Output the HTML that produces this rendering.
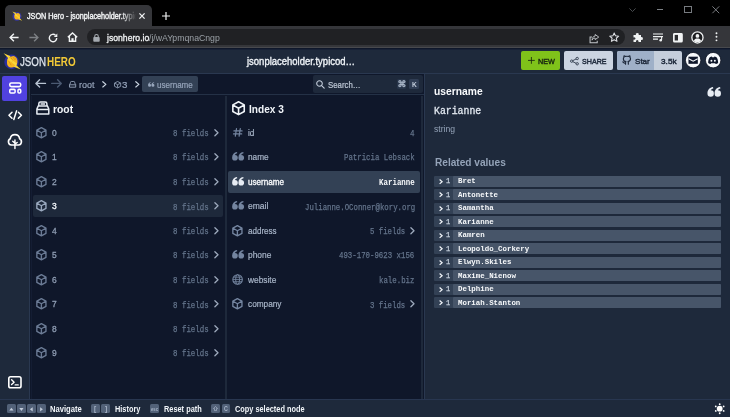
<!DOCTYPE html>
<html lang="en">
<head>
<meta charset="utf-8">
<title>JSON Hero - jsonplaceholder.typicode.com</title>
<style>
*{box-sizing:border-box;margin:0;padding:0}
html,body{width:730px;height:417px;overflow:hidden;background:#0f172a}
body{position:relative;font-family:"Liberation Sans",sans-serif;color:#e2e8f0;will-change:transform}
.a{position:absolute}
.t{position:absolute;white-space:nowrap;line-height:1;transform-origin:0 0}
svg{position:absolute;overflow:visible}
</style>
</head>
<body>
<div class="a" style="left:0px;top:0px;width:730px;height:26px;background:#000;"></div>
<div class="a" style="left:5px;top:5px;width:147px;height:22px;background:#35363a;border-radius:5px;border-radius:5px 5px 0 0;"></div>
<div class="a" style="left:0px;top:26px;width:730px;height:21.4px;background:#35363a;"></div>
<div class="a" style="left:0px;top:47.4px;width:730px;height:1.1px;background:#48494d;"></div>
<div class="a" style="left:87px;top:29.2px;width:537.5px;height:16.3px;background:#202124;border-radius:8.15px;"></div>
<svg style="left:11.8px;top:10.6px" width="10.6" height="10.6" viewBox="0 0 18.5 17.5"><circle cx="8.600" cy="8.900" r="7.800" fill="#3336a8"/><path d="M4 8.200 C3.900 5.900 5.600 4.300 7.600 3.700 L10.300 3.100 C12.500 3.300 14.100 5.200 14.400 7.400 C14.700 10 13.700 12.500 11.700 13.700 C9.600 14.900 6.500 14.700 5 12.900 C4 11.700 3.900 9.700 4 8.200 Z" fill="#f6b71f"/><path d="M0.600 0.300 L7.600 3.200 L6.300 4.700 L9.800 7.500 L8.300 9.300 L4.300 6.300 L5.300 5.200 Z M17.800 16.600 L10.800 13.800 L12.200 12.300 L8.600 9.500 L10.100 7.700 L14.200 10.700 L13.100 11.900 Z" fill="#f9d63a"/></svg>
<div class="a" style="left:26.7px;top:8px;width:109.3px;height:16px;overflow:hidden">
<div class="t" style="left:0.00px;top:4.00px;font-size:8.6px;color:#f1f3f4;-webkit-text-stroke:0.4px #f1f3f4;transform:scaleX(0.8429);">JSON Hero - jsonplaceholder.typicode.com</div>
</div>
<div class="a" style="left:122px;top:8px;width:14px;height:16px;background:linear-gradient(90deg,rgba(53,54,58,0),#35363a);"></div>
<svg style="left:139px;top:13px" width="6" height="6" viewBox="0 0 6 6"><path d="M0.4 0.4 L5.6 5.6 M5.6 0.4 L0.4 5.6" stroke="#f1f3f4" stroke-width="1.3" fill="none"/></svg>
<svg style="left:162px;top:12.3px" width="8" height="8" viewBox="0 0 8 8"><path d="M4 0 V8 M0 4 H8" stroke="#f1f3f4" stroke-width="1.2" fill="none"/></svg>
<svg style="left:628.5px;top:7.9px" width="7" height="4" viewBox="0 0 7 4"><path d="M0.4 0.4 L3.5 3.5 L6.6 0.4" stroke="#505357" stroke-width="0.9" fill="none"/></svg>
<div class="a" style="left:656.6px;top:9.4px;width:6.4px;height:0.9px;background:#7d8186;"></div>
<div class="a" style="left:684.4px;top:5.7px;width:7.8px;height:7.6px;border:1px solid #777b80"></div>
<svg style="left:712.2px;top:5.7px" width="7.6" height="7.6" viewBox="0 0 8 8"><path d="M0.4 0.4 L7.6 7.6 M7.6 0.4 L0.4 7.6" stroke="#7d8186" stroke-width="1" fill="none"/></svg>
<svg style="left:8.5px;top:33px" width="10" height="9" viewBox="0 0 10 9"><path d="M9.6 4.5 H1.4 M4.9 0.7 L1.1 4.5 L4.9 8.3" stroke="#f1f3f4" stroke-width="1.4" fill="none"/></svg>
<svg style="left:28.5px;top:33px" width="10" height="9" viewBox="0 0 10 9"><path d="M0.4 4.5 H8.6 M5.1 0.7 L8.9 4.5 L5.1 8.3" stroke="#7d8084" stroke-width="1.4" fill="none"/></svg>
<svg style="left:48px;top:32.5px" width="10" height="10" viewBox="0 0 10 10"><path d="M8.7 5 A3.7 3.7 0 1 1 7.5 2.3" stroke="#f1f3f4" stroke-width="1.4" fill="none"/><path d="M9.3 0.6 V4.1 H5.8 Z" fill="#f1f3f4"/></svg>
<svg style="left:67px;top:32.2px" width="11" height="10" viewBox="0 0 11 10"><path d="M0.8 5.2 L5.5 1 L10.2 5.2 M2.4 4.2 V9.3 H8.6 V4.2" stroke="#f1f3f4" stroke-width="1.4" fill="none"/><rect x="4.4" y="6.2" width="2.2" height="3" fill="#f1f3f4"/></svg>
<svg style="left:93.4px;top:33.7px" width="7" height="7.8" viewBox="0 0 7 8"><rect x="0.2" y="3.2" width="6.6" height="4.7" rx="0.8" fill="#a4a9af"/><path d="M1.7 3.4 V2.3 A1.8 1.8 0 0 1 5.3 2.3 V3.4" stroke="#a4a9af" stroke-width="1.1" fill="none"/></svg>
<div class="t" style="left:106.70px;top:33.00px;font-size:9.6px;color:#f1f3f4;-webkit-text-stroke:0.3px #f1f3f4;transform:scaleX(0.9012);">jsonhero.io</div>
<div class="t" style="left:149.20px;top:33.00px;font-size:9.6px;color:#9aa0a6;transform:scaleX(0.9071);">/j/wAYpmqnaCngp</div>
<svg style="left:588.7px;top:33.6px" width="10.3" height="9.2" viewBox="0 0 10 9"><path d="M3 3 H1 V8.5 H8 V6.5" stroke="#c4c7cc" stroke-width="1" fill="none"/><path d="M6 0.5 L9.5 3 L6 5.5 V4 C4.5 4 3.6 4.6 3 6 C3 3.8 4 2.3 6 2 Z" stroke="#c4c7cc" stroke-width="0.9" fill="none"/></svg>
<svg style="left:608.7px;top:32.3px" width="10.4" height="10.4" viewBox="0 0 10 10"><path d="M5 0.9 L6.25 3.7 L9.3 4 L7 6 L7.7 9 L5 7.4 L2.3 9 L3 6 L0.7 4 L3.75 3.7 Z" stroke="#dfe1e5" stroke-width="1" fill="none" stroke-linejoin="round"/></svg>
<svg style="left:633px;top:32px" width="10" height="10" viewBox="0 0 10 10"><path d="M0.5 3 H3 A1.4 1.4 0 1 1 5.6 3 H8 V5.2 A1.4 1.4 0 1 1 8 7.8 V10 H5.4 A1.3 1.3 0 1 0 3.1 10 H0.5 V7.6 A1.3 1.3 0 1 0 0.5 5.4 Z" fill="#f1f3f4"/></svg>
<svg style="left:653px;top:33px" width="10" height="9" viewBox="0 0 10 9"><path d="M0 1 H10 M0 3.6 H10 M0 6.2 H5" stroke="#f1f3f4" stroke-width="1.2" fill="none"/><path d="M8.6 3.6 V7" stroke="#f1f3f4" stroke-width="1.1"/><circle cx="7.7" cy="7.3" r="1.3" fill="#f1f3f4"/></svg>
<svg style="left:672.5px;top:32.6px" width="9.8" height="9.4" viewBox="0 0 9.8 9.4"><rect x="0.7" y="0.7" width="8.400" height="8" rx="0.8" stroke="#f1f3f4" stroke-width="1.400" fill="#f1f3f4"/><rect x="1.700" y="1.900" width="3.300" height="5.600" fill="#2a2b2e"/></svg>
<svg style="left:691px;top:31.2px" width="12.9" height="12.9" viewBox="0 0 12.9 12.9"><circle cx="6.450" cy="6.450" r="5.600" fill="#1b1c1f" stroke="#f1f3f4" stroke-width="1.300"/><circle cx="6.450" cy="4.900" r="1.900" fill="#f1f3f4"/><path d="M2.900 9.700 C3.300 8 4.800 7.500 6.450 7.500 C8.100 7.500 9.600 8 10 9.700 C9 10.700 7.800 11.200 6.450 11.200 C5.100 11.200 3.900 10.700 2.900 9.700 Z" fill="#f1f3f4"/></svg>
<svg style="left:715.2px;top:32.3px" width="3" height="9.6" viewBox="0 0 3 10"><circle cx="1.5" cy="1.3" r="1" fill="#f1f3f4"/><circle cx="1.5" cy="5" r="1" fill="#f1f3f4"/><circle cx="1.5" cy="8.7" r="1" fill="#f1f3f4"/></svg>
<div class="a" style="left:0px;top:48.5px;width:730px;height:25px;background:#1e293b;"></div>
<div class="a" style="left:0px;top:48.5px;width:730px;height:1.6px;background:#172136;"></div>
<div class="a" style="left:0px;top:73px;width:730px;height:1px;background:#2a3850;"></div>
<svg style="left:3px;top:52.5px" width="18.5" height="17.5" viewBox="0 0 18.5 17.5"><circle cx="8.600" cy="8.900" r="7.300" fill="#2b2f9f"/><path d="M4 8.200 C3.900 5.900 5.600 4.300 7.600 3.700 L10.300 3.100 C12.500 3.300 14.100 5.200 14.400 7.400 C14.700 10 13.700 12.500 11.700 13.700 C9.600 14.900 6.500 14.700 5 12.900 C4 11.700 3.900 9.700 4 8.200 Z" fill="#f6b71f"/><path d="M7.900 4.600 L9.900 7.600 M9.900 3.900 L11.900 6.900 M11.700 4.600 L13.300 7.300 M5.600 8.200 L8.200 12.300" stroke="#c98a12" stroke-width="0.600" fill="none"/><path d="M0.600 0.300 L7.600 3.200 L6.300 4.700 L9.800 7.500 L8.300 9.300 L4.300 6.300 L5.300 5.200 Z M17.800 16.600 L10.800 13.800 L12.200 12.300 L8.600 9.500 L10.100 7.700 L14.200 10.700 L13.100 11.900 Z" fill="#f9d63a"/></svg>
<div class="t" style="left:20.40px;top:56.00px;font-size:12px;color:#e2e8f0;-webkit-text-stroke:0.25px #e2e8f0;transform:scaleX(0.8121);">JSON</div>
<div class="t" style="left:47.00px;top:56.00px;font-size:12px;color:#f2c937;font-weight:bold;transform:scaleX(0.8249);">HERO</div>
<div class="t" style="left:247.30px;top:56.00px;font-size:11px;color:#f1f5f9;-webkit-text-stroke:0.35px #f1f5f9;transform:scaleX(0.8615);">jsonplaceholder.typicod…</div>
<div class="a" style="left:521px;top:51.3px;width:39.2px;height:18.8px;background:#7fc21a;border-radius:2px;"></div>
<svg style="left:527.8px;top:57.4px" width="6.8" height="6.8" viewBox="0 0 7 7"><path d="M3.5 0 V7 M0 3.5 H7" stroke="#1b2a10" stroke-width="0.9" fill="none"/></svg>
<div class="t" style="left:537.60px;top:58.00px;font-size:8.1px;color:#1b2a10;-webkit-text-stroke:0.45px #1b2a10;transform:scaleX(0.8946);">NEW</div>
<div class="a" style="left:564px;top:51.3px;width:48.6px;height:18.8px;background:#cbd4e1;border-radius:2px;"></div>
<svg style="left:570px;top:56.6px" width="9" height="8.3" viewBox="0 0 9 8.3"><circle cx="1.7" cy="4.15" r="1.2" stroke="#1e293b" stroke-width="0.8" fill="none"/><circle cx="7.2" cy="1.5" r="1.2" stroke="#1e293b" stroke-width="0.8" fill="none"/><circle cx="7.2" cy="6.8" r="1.2" stroke="#1e293b" stroke-width="0.8" fill="none"/><path d="M2.8 3.6 L6.1 2 M2.8 4.7 L6.1 6.3" stroke="#1e293b" stroke-width="0.8"/></svg>
<div class="t" style="left:582.00px;top:58.00px;font-size:8.1px;color:#1e293b;-webkit-text-stroke:0.45px #1e293b;transform:scaleX(0.8820);">SHARE</div>
<div class="a" style="left:617px;top:51.3px;width:64.8px;height:18.8px;background:#c5cedb;border-radius:2px;"></div>
<div class="a" style="left:617px;top:51.3px;width:37.4px;height:18.8px;background:#9fb0c8;border-radius:2px 0 0 2px;"></div>
<svg style="left:622.1px;top:55.4px" width="9.5" height="10.1" viewBox="0 0 24 23"><path d="M9 19c-5 1.5-5-2.5-7-3m14 6v-3.87a3.37 3.37 0 0 0-.94-2.61c3.14-.35 6.44-1.54 6.44-7A5.44 5.44 0 0 0 20 4.77 5.07 5.07 0 0 0 19.91 1S18.73.65 16 2.48a13.38 13.38 0 0 0-7 0C6.27.65 5.09 1 5.09 1A5.07 5.07 0 0 0 5 4.77a5.44 5.44 0 0 0-1.500 3.780c0 5.420 3.300 6.610 6.440 7A3.370 3.370 0 0 0 9 18.130V22" stroke="#1e293b" stroke-width="2.9" fill="none" stroke-linecap="round" stroke-linejoin="round"/></svg>
<div class="t" style="left:634.70px;top:58.00px;font-size:8.1px;color:#1e293b;-webkit-text-stroke:0.45px #1e293b;transform:scaleX(0.9960);">Star</div>
<div class="t" style="left:660.50px;top:58.00px;font-size:8.1px;color:#1e293b;-webkit-text-stroke:0.45px #1e293b;transform:scaleX(1.0188);">3.5k</div>
<svg style="left:685.3px;top:52.3px" width="16.3" height="16.3" viewBox="0 0 16 16"><circle cx="8" cy="8" r="7.6" fill="#f8fafc" stroke="#0b1120" stroke-width="0.8"/><path d="M3.4 4.6 H12.6 V11.6 H3.4 Z" fill="#0f172a"/><path d="M3.6 6.6 L8 9 L12.4 6.6" stroke="#f8fafc" stroke-width="1.1" fill="none"/></svg>
<svg style="left:705.2px;top:52.3px" width="16.3" height="16.3" viewBox="0 0 16 16"><circle cx="8" cy="8" r="7.6" fill="#f8fafc" stroke="#0b1120" stroke-width="0.8"/><path d="M3.1 10.9 C3.1 8.2 3.8 6.300 4.700 5.200 C5.500 4.800 6.200 4.600 6.800 4.500 L7.100 5.100 H8.900 L9.200 4.500 C9.800 4.600 10.500 4.800 11.300 5.200 C12.200 6.300 12.900 8.200 12.900 10.900 C12.100 11.500 11.300 11.800 10.500 11.900 L9.900 11 H6.100 L5.500 11.900 C4.700 11.800 3.900 11.500 3.100 10.900 Z" fill="#0f172a"/><ellipse cx="6.300" cy="8.600" rx="0.950" ry="1.050" fill="#f8fafc"/><ellipse cx="9.700" cy="8.600" rx="0.950" ry="1.050" fill="#f8fafc"/></svg>
<div class="a" style="left:0px;top:74px;width:29.2px;height:325px;background:#1e293b;"></div>
<div class="a" style="left:29.2px;top:74px;width:1.3px;height:325px;background:#2a3850;"></div>
<div class="a" style="left:2.2px;top:75.7px;width:25.1px;height:25.6px;background:#5142e0;border-radius:2px;"></div>
<svg style="left:8.7px;top:82.2px" width="12.5" height="12" viewBox="0 0 13.1 12.3"><rect x="0.8" y="0.8" width="11.5" height="3.9" rx="1.6" stroke="#fff" stroke-width="1.6" fill="none"/><rect x="0.8" y="7.6" width="5.6" height="3.9" rx="1.1" stroke="#fff" stroke-width="1.6" fill="none"/><rect x="9.4" y="7.6" width="2.9" height="3.9" rx="1.1" stroke="#fff" stroke-width="1.6" fill="none"/></svg>
<svg style="left:6.6px;top:110.2px" width="16.4" height="10.4" viewBox="0 0 15.1 10.9"><path d="M4.2 2.3 L1 5.45 L4.2 8.6 M10.9 2.3 L14.1 5.45 L10.9 8.6 M9 0.9 L6.1 10" stroke="#fff" stroke-width="1.6" fill="none" stroke-linecap="round" stroke-linejoin="round"/></svg>
<svg style="left:7.1px;top:132.9px" width="15.9" height="16.7" viewBox="0 0 15.5 15.8"><path d="M4.300 11.500 A3.300 3.300 0 0 1 3.200 5.300 A4.600 4.600 0 0 1 12.300 5.300 A3.300 3.300 0 0 1 11.200 11.500 Z" stroke="#fff" stroke-width="1.6" fill="none" stroke-linejoin="round"/><path d="M7.750 15 V6.600 M7.750 9.600 L5.600 7.800 M7.750 10.800 L9.900 9" stroke="#fff" stroke-width="1.4" fill="none" stroke-linecap="round"/></svg>
<svg style="left:8.1px;top:375.5px" width="13.8" height="12.5" viewBox="0 0 13.8 12.5"><rect x="0.8" y="0.8" width="12.2" height="10.9" rx="1.8" stroke="#fff" stroke-width="1.6" fill="none"/><path d="M3.6 3.800 L6.100 6.200 L3.600 8.600 M7.200 8.900 H10.200" stroke="#fff" stroke-width="1.4" fill="none" stroke-linecap="round" stroke-linejoin="round"/></svg>
<div class="a" style="left:30.5px;top:94px;width:393px;height:1px;background:#243146;"></div>
<svg style="left:34.6px;top:79.3px" width="11.2" height="8.8" viewBox="0 0 11.2 8.8"><path d="M10.5 4.4 H1 M4.600 0.8 L0.9 4.4 L4.600 8" stroke="#b9c4d3" stroke-width="1.4" fill="none" stroke-linecap="round" stroke-linejoin="round"/></svg>
<svg style="left:51px;top:79.3px" width="11.2" height="8.8" viewBox="0 0 11.2 8.8"><path d="M0.7 4.4 H10.2 M6.600 0.8 L10.300 4.4 L6.600 8" stroke="#4b5a72" stroke-width="1.4" fill="none" stroke-linecap="round" stroke-linejoin="round"/></svg>
<svg style="left:69.1px;top:80.9px" width="7.2" height="6.7" viewBox="0 0 7.2 6.7"><path d="M0.5 6.200 V3.600 L1.500 2 V1.400 A0.900 0.900 0 0 1 2.400 0.500 H4.800 A0.900 0.900 0 0 1 5.700 1.400 V2 L6.700 3.600 V6.200 Z M0.500 3.800 H6.700" stroke="#97a5bb" stroke-width="0.9" fill="none" stroke-linejoin="round"/></svg>
<div class="t" style="left:78.90px;top:80.00px;font-size:9.4px;color:#97a5bb;-webkit-text-stroke:0.2px #97a5bb;transform:scaleX(0.9532);">root</div>
<svg style="left:101.8px;top:81.4px" width="4.7" height="6.7" viewBox="0 0 4.7 6.7"><path d="M0.8 0.700 L3.900 3.350 L0.800 6" stroke="#cbd5e1" stroke-width="1.2" fill="none" stroke-linecap="round" stroke-linejoin="round"/></svg>
<svg style="left:113.8px;top:80.7px" width="7.2" height="7.4" viewBox="0 0 7.2 7.4"><path d="M3.600 0.500 L6.700 2.100 V5.300 L3.600 6.900 L0.500 5.300 V2.100 Z M0.700 2.200 L3.600 3.700 L6.500 2.200 M3.600 3.700 V6.700" stroke="#97a5bb" stroke-width="0.85" fill="none" stroke-linejoin="round"/></svg>
<div class="t" style="left:122.20px;top:80.00px;font-size:9.4px;color:#97a5bb;-webkit-text-stroke:0.2px #97a5bb;transform:scaleX(1.0347);">3</div>
<svg style="left:134.8px;top:81.4px" width="4.7" height="6.7" viewBox="0 0 4.7 6.7"><path d="M0.8 0.700 L3.900 3.350 L0.800 6" stroke="#cbd5e1" stroke-width="1.2" fill="none" stroke-linecap="round" stroke-linejoin="round"/></svg>
<div class="a" style="left:142.1px;top:75.9px;width:56.1px;height:16.4px;background:#334155;border-radius:2px;"></div>
<svg style="left:147.7px;top:82px" width="6.3" height="5" viewBox="0 0 11.8 8.7"><path d="M0.100 5.750 C0.100 2.600 2.100 0.500 5 0.100 L5.300 1.300 C4.100 1.600 3.300 2.200 3 2.900 A2.850 2.850 0 1 1 0.100 5.750 Z" fill="#97a5bb"/><path d="M6.400 5.750 C6.400 2.600 8.400 0.500 11.300 0.100 L11.600 1.300 C10.400 1.600 9.600 2.200 9.300 2.900 A2.850 2.850 0 1 1 6.400 5.750 Z" fill="#97a5bb"/></svg>
<div class="t" style="left:157.20px;top:80.00px;font-size:9.4px;color:#97a5bb;-webkit-text-stroke:0.2px #97a5bb;transform:scaleX(0.8584);">username</div>
<div class="a" style="left:313.4px;top:75.4px;width:109.4px;height:17.6px;background:#1e293b;border-radius:2px;"></div>
<svg style="left:316.3px;top:80px" width="8.8" height="8.8" viewBox="0 0 8.8 8.8"><circle cx="3.500" cy="3.500" r="2.800" stroke="#c3cddb" stroke-width="1.05" fill="none"/><path d="M5.600 5.600 L8.200 8.200" stroke="#c3cddb" stroke-width="1.15" stroke-linecap="round"/></svg>
<div class="t" style="left:328.40px;top:80.00px;font-size:9.4px;color:#c0cad8;-webkit-text-stroke:0.2px #c0cad8;transform:scaleX(0.8339);">Search…</div>
<div class="a" style="left:396.9px;top:79.2px;width:9.5px;height:10px;background:#273449;border-radius:1.5px;"></div>
<div class="t" style="left:397.6px;top:80px;font-size:8.8px;color:#b4c0d2;-webkit-text-stroke:0.3px #b4c0d2;font-family:'DejaVu Sans',sans-serif">⌘</div>
<div class="a" style="left:409.3px;top:79.2px;width:9.6px;height:9.8px;background:#303d54;border-radius:1.5px;"></div>
<div class="t" style="left:411.60px;top:81.00px;font-size:7.2px;color:#c3cddb;font-weight:bold;transform:scaleX(0.9225);">K</div>
<div class="a" style="left:30.5px;top:96px;width:1.5px;height:303px;background:#141d33;"></div>
<div class="a" style="left:225.3px;top:96px;width:2px;height:303px;background:#1e293b;"></div>
<div class="a" style="left:421.3px;top:96px;width:2px;height:303px;background:#1e293b;"></div>
<svg style="left:35.6px;top:101.4px" width="13.7" height="13.9" viewBox="0 0 13.7 13.7"><path d="M0.900 12.800 V8.400 C0.900 7.600 1.200 7 1.600 6.300 L2.800 3.900 V2.600 A1.700 1.700 0 0 1 4.500 0.900 H9.200 A1.700 1.700 0 0 1 10.900 2.600 V3.900 L12.100 6.300 C12.500 7 12.800 7.600 12.800 8.400 V12.800 Z M1 8.300 H12.700 M2.800 4.800 H10.900 M4.600 3 H9.100" stroke="#e8edf4" stroke-width="1.5" fill="none" stroke-linejoin="round"/></svg>
<div class="t" style="left:52.60px;top:103.00px;font-size:11.6px;color:#f1f5f9;font-weight:bold;transform:scaleX(0.8915);">root</div>
<div class="a" style="left:32.5px;top:195.2px;width:190.5px;height:21.8px;background:#1e293b;border-radius:2px;"></div>
<svg style="left:231.8px;top:100.6px" width="13.1" height="14.4" viewBox="0 0 13 14.4"><path d="M6.500 0.800 L12.200 3.900 V10.500 L6.500 13.600 L0.800 10.500 V3.900 Z M1.100 4.100 L6.500 7.200 L11.900 4.100 M6.500 7.200 V13.300" stroke="#f1f5f9" stroke-width="1.6" fill="none" stroke-linejoin="round"/></svg>
<div class="t" style="left:248.70px;top:104.00px;font-size:11.5px;color:#f1f5f9;font-weight:bold;transform:scaleX(0.8779);">Index 3</div>
<div class="a" style="left:228px;top:170.6px;width:191.7px;height:22px;background:#334155;border-radius:2px;"></div>
<svg style="left:35.6px;top:126.8px" width="10.8" height="11.5" viewBox="0 0 13 14.4"><path d="M6.500 0.800 L12.200 3.900 V10.500 L6.500 13.600 L0.800 10.500 V3.900 Z M1.100 4.100 L6.500 7.200 L11.900 4.100 M6.500 7.200 V13.300" stroke="#6b7b95" stroke-width="1.7" fill="none" stroke-linejoin="round"/></svg>
<div class="t" style="left:52.00px;top:128.00px;font-size:9.4px;color:#909eb4;-webkit-text-stroke:0.3px #909eb4;transform:scaleX(0.9006);">0</div>
<div class="t" style="left:172.60px;top:129.00px;font-size:9.4px;color:#64748b;font-family:'Liberation Mono',monospace;-webkit-text-stroke:0.25px #64748b;transform:scaleX(0.7931);">8 fields</div>
<svg style="left:213.8px;top:128.8px" width="4.9" height="7.6" viewBox="0 0 4.9 7.6"><path d="M0.900 0.800 L4 3.800 L0.900 6.800" stroke="#9eaabd" stroke-width="1.3" fill="none" stroke-linecap="round" stroke-linejoin="round"/></svg>
<svg style="left:35.6px;top:151.3px" width="10.8" height="11.5" viewBox="0 0 13 14.4"><path d="M6.500 0.800 L12.200 3.900 V10.500 L6.500 13.600 L0.800 10.500 V3.900 Z M1.100 4.100 L6.500 7.200 L11.900 4.100 M6.500 7.200 V13.300" stroke="#6b7b95" stroke-width="1.7" fill="none" stroke-linejoin="round"/></svg>
<div class="t" style="left:52.00px;top:152.00px;font-size:9.4px;color:#909eb4;-webkit-text-stroke:0.3px #909eb4;transform:scaleX(0.9006);">1</div>
<div class="t" style="left:172.60px;top:153.00px;font-size:9.4px;color:#64748b;font-family:'Liberation Mono',monospace;-webkit-text-stroke:0.25px #64748b;transform:scaleX(0.7931);">8 fields</div>
<svg style="left:213.8px;top:153.3px" width="4.9" height="7.6" viewBox="0 0 4.9 7.6"><path d="M0.900 0.800 L4 3.800 L0.900 6.800" stroke="#9eaabd" stroke-width="1.3" fill="none" stroke-linecap="round" stroke-linejoin="round"/></svg>
<svg style="left:35.6px;top:175.8px" width="10.8" height="11.5" viewBox="0 0 13 14.4"><path d="M6.500 0.800 L12.200 3.900 V10.500 L6.500 13.600 L0.800 10.500 V3.900 Z M1.100 4.100 L6.500 7.200 L11.900 4.100 M6.500 7.200 V13.300" stroke="#6b7b95" stroke-width="1.7" fill="none" stroke-linejoin="round"/></svg>
<div class="t" style="left:52.00px;top:177.00px;font-size:9.4px;color:#909eb4;-webkit-text-stroke:0.3px #909eb4;transform:scaleX(0.9006);">2</div>
<div class="t" style="left:172.60px;top:178.00px;font-size:9.4px;color:#64748b;font-family:'Liberation Mono',monospace;-webkit-text-stroke:0.25px #64748b;transform:scaleX(0.7931);">8 fields</div>
<svg style="left:213.8px;top:177.8px" width="4.9" height="7.6" viewBox="0 0 4.9 7.6"><path d="M0.900 0.800 L4 3.800 L0.900 6.800" stroke="#9eaabd" stroke-width="1.3" fill="none" stroke-linecap="round" stroke-linejoin="round"/></svg>
<svg style="left:35.6px;top:200.3px" width="10.8" height="11.5" viewBox="0 0 13 14.4"><path d="M6.500 0.800 L12.200 3.900 V10.500 L6.500 13.600 L0.800 10.500 V3.900 Z M1.100 4.100 L6.500 7.200 L11.900 4.100 M6.500 7.200 V13.300" stroke="#9aa9bf" stroke-width="1.7" fill="none" stroke-linejoin="round"/></svg>
<div class="t" style="left:52.00px;top:201.00px;font-size:9.4px;color:#f1f5f9;-webkit-text-stroke:0.35px #f1f5f9;transform:scaleX(0.9006);">3</div>
<div class="t" style="left:172.60px;top:203.00px;font-size:9.4px;color:#64748b;font-family:'Liberation Mono',monospace;-webkit-text-stroke:0.25px #64748b;transform:scaleX(0.7931);">8 fields</div>
<svg style="left:213.8px;top:202.3px" width="4.9" height="7.6" viewBox="0 0 4.9 7.6"><path d="M0.900 0.800 L4 3.800 L0.900 6.800" stroke="#9eaabd" stroke-width="1.3" fill="none" stroke-linecap="round" stroke-linejoin="round"/></svg>
<svg style="left:35.6px;top:224.8px" width="10.8" height="11.5" viewBox="0 0 13 14.4"><path d="M6.500 0.800 L12.200 3.900 V10.500 L6.500 13.600 L0.800 10.500 V3.900 Z M1.100 4.100 L6.500 7.200 L11.900 4.100 M6.500 7.200 V13.300" stroke="#6b7b95" stroke-width="1.7" fill="none" stroke-linejoin="round"/></svg>
<div class="t" style="left:52.00px;top:226.00px;font-size:9.4px;color:#909eb4;-webkit-text-stroke:0.3px #909eb4;transform:scaleX(0.9006);">4</div>
<div class="t" style="left:172.60px;top:227.00px;font-size:9.4px;color:#64748b;font-family:'Liberation Mono',monospace;-webkit-text-stroke:0.25px #64748b;transform:scaleX(0.7931);">8 fields</div>
<svg style="left:213.8px;top:226.8px" width="4.9" height="7.6" viewBox="0 0 4.9 7.6"><path d="M0.900 0.800 L4 3.800 L0.900 6.800" stroke="#9eaabd" stroke-width="1.3" fill="none" stroke-linecap="round" stroke-linejoin="round"/></svg>
<svg style="left:35.6px;top:249.3px" width="10.8" height="11.5" viewBox="0 0 13 14.4"><path d="M6.500 0.800 L12.200 3.900 V10.500 L6.500 13.600 L0.800 10.500 V3.900 Z M1.100 4.100 L6.500 7.200 L11.900 4.100 M6.500 7.200 V13.300" stroke="#6b7b95" stroke-width="1.7" fill="none" stroke-linejoin="round"/></svg>
<div class="t" style="left:52.00px;top:250.00px;font-size:9.4px;color:#909eb4;-webkit-text-stroke:0.3px #909eb4;transform:scaleX(0.9006);">5</div>
<div class="t" style="left:172.60px;top:251.00px;font-size:9.4px;color:#64748b;font-family:'Liberation Mono',monospace;-webkit-text-stroke:0.25px #64748b;transform:scaleX(0.7931);">8 fields</div>
<svg style="left:213.8px;top:251.3px" width="4.9" height="7.6" viewBox="0 0 4.9 7.6"><path d="M0.900 0.800 L4 3.800 L0.900 6.800" stroke="#9eaabd" stroke-width="1.3" fill="none" stroke-linecap="round" stroke-linejoin="round"/></svg>
<svg style="left:35.6px;top:273.8px" width="10.8" height="11.5" viewBox="0 0 13 14.4"><path d="M6.500 0.800 L12.200 3.900 V10.500 L6.500 13.600 L0.800 10.500 V3.900 Z M1.100 4.100 L6.500 7.200 L11.900 4.100 M6.500 7.200 V13.300" stroke="#6b7b95" stroke-width="1.7" fill="none" stroke-linejoin="round"/></svg>
<div class="t" style="left:52.00px;top:275.00px;font-size:9.4px;color:#909eb4;-webkit-text-stroke:0.3px #909eb4;transform:scaleX(0.9006);">6</div>
<div class="t" style="left:172.60px;top:276.00px;font-size:9.4px;color:#64748b;font-family:'Liberation Mono',monospace;-webkit-text-stroke:0.25px #64748b;transform:scaleX(0.7931);">8 fields</div>
<svg style="left:213.8px;top:275.8px" width="4.9" height="7.6" viewBox="0 0 4.9 7.6"><path d="M0.900 0.800 L4 3.800 L0.900 6.800" stroke="#9eaabd" stroke-width="1.3" fill="none" stroke-linecap="round" stroke-linejoin="round"/></svg>
<svg style="left:35.6px;top:298.3px" width="10.8" height="11.5" viewBox="0 0 13 14.4"><path d="M6.500 0.800 L12.200 3.900 V10.500 L6.500 13.600 L0.800 10.500 V3.900 Z M1.100 4.100 L6.500 7.200 L11.900 4.100 M6.500 7.200 V13.300" stroke="#6b7b95" stroke-width="1.7" fill="none" stroke-linejoin="round"/></svg>
<div class="t" style="left:52.00px;top:299.00px;font-size:9.4px;color:#909eb4;-webkit-text-stroke:0.3px #909eb4;transform:scaleX(0.9006);">7</div>
<div class="t" style="left:172.60px;top:301.00px;font-size:9.4px;color:#64748b;font-family:'Liberation Mono',monospace;-webkit-text-stroke:0.25px #64748b;transform:scaleX(0.7931);">8 fields</div>
<svg style="left:213.8px;top:300.3px" width="4.9" height="7.6" viewBox="0 0 4.9 7.6"><path d="M0.900 0.800 L4 3.800 L0.900 6.800" stroke="#9eaabd" stroke-width="1.3" fill="none" stroke-linecap="round" stroke-linejoin="round"/></svg>
<svg style="left:35.6px;top:322.8px" width="10.8" height="11.5" viewBox="0 0 13 14.4"><path d="M6.500 0.800 L12.200 3.900 V10.500 L6.500 13.600 L0.800 10.500 V3.900 Z M1.100 4.100 L6.500 7.200 L11.900 4.100 M6.500 7.200 V13.300" stroke="#6b7b95" stroke-width="1.7" fill="none" stroke-linejoin="round"/></svg>
<div class="t" style="left:52.00px;top:324.00px;font-size:9.4px;color:#909eb4;-webkit-text-stroke:0.3px #909eb4;transform:scaleX(0.9006);">8</div>
<div class="t" style="left:172.60px;top:325.00px;font-size:9.4px;color:#64748b;font-family:'Liberation Mono',monospace;-webkit-text-stroke:0.25px #64748b;transform:scaleX(0.7931);">8 fields</div>
<svg style="left:213.8px;top:324.8px" width="4.9" height="7.6" viewBox="0 0 4.9 7.6"><path d="M0.900 0.800 L4 3.800 L0.900 6.800" stroke="#9eaabd" stroke-width="1.3" fill="none" stroke-linecap="round" stroke-linejoin="round"/></svg>
<svg style="left:35.6px;top:347.3px" width="10.8" height="11.5" viewBox="0 0 13 14.4"><path d="M6.500 0.800 L12.200 3.900 V10.500 L6.500 13.600 L0.800 10.500 V3.900 Z M1.100 4.100 L6.500 7.200 L11.900 4.100 M6.500 7.200 V13.300" stroke="#6b7b95" stroke-width="1.7" fill="none" stroke-linejoin="round"/></svg>
<div class="t" style="left:52.00px;top:348.00px;font-size:9.4px;color:#909eb4;-webkit-text-stroke:0.3px #909eb4;transform:scaleX(0.9006);">9</div>
<div class="t" style="left:172.60px;top:349.00px;font-size:9.4px;color:#64748b;font-family:'Liberation Mono',monospace;-webkit-text-stroke:0.25px #64748b;transform:scaleX(0.7931);">8 fields</div>
<svg style="left:213.8px;top:349.3px" width="4.9" height="7.6" viewBox="0 0 4.9 7.6"><path d="M0.900 0.800 L4 3.800 L0.900 6.800" stroke="#9eaabd" stroke-width="1.3" fill="none" stroke-linecap="round" stroke-linejoin="round"/></svg>
<svg style="left:232.5px;top:128px" width="9.6" height="8.8" viewBox="0 0 9.6 8.8"><path d="M3.500 0.600 L2.300 8.200 M7.300 0.600 L6.100 8.200 M0.900 2.900 H9.100 M0.500 5.900 H8.700" stroke="#7485a0" stroke-width="1.2" fill="none" stroke-linecap="round"/></svg>
<div class="t" style="left:248.20px;top:128.00px;font-size:9.4px;color:#a9b6c9;-webkit-text-stroke:0.2px #a9b6c9;transform:scaleX(0.8771);">id</div>
<div class="t" style="left:410.00px;top:129.00px;font-size:9.4px;color:#64748b;font-family:'Liberation Mono',monospace;-webkit-text-stroke:0.25px #64748b;transform:scaleX(0.7978);">4</div>
<svg style="left:231.5px;top:152.3px" width="11.8" height="8.7" viewBox="0 0 11.8 8.7"><path d="M0.100 5.750 C0.100 2.600 2.100 0.500 5 0.100 L5.300 1.300 C4.100 1.600 3.300 2.200 3 2.900 A2.850 2.850 0 1 1 0.100 5.750 Z" fill="#7485a0"/><path d="M6.400 5.750 C6.400 2.600 8.400 0.500 11.300 0.100 L11.600 1.300 C10.400 1.600 9.600 2.200 9.300 2.900 A2.850 2.850 0 1 1 6.400 5.750 Z" fill="#7485a0"/></svg>
<div class="t" style="left:248.20px;top:152.00px;font-size:9.4px;color:#a9b6c9;-webkit-text-stroke:0.2px #a9b6c9;transform:scaleX(0.8826);">name</div>
<div class="t" style="left:344.00px;top:153.00px;font-size:9.4px;color:#64748b;font-family:'Liberation Mono',monospace;-webkit-text-stroke:0.25px #64748b;transform:scaleX(0.7854);">Patricia Lebsack</div>
<svg style="left:231.5px;top:176.8px" width="11.8" height="8.7" viewBox="0 0 11.8 8.7"><path d="M0.100 5.750 C0.100 2.600 2.100 0.500 5 0.100 L5.300 1.300 C4.100 1.600 3.300 2.200 3 2.900 A2.850 2.850 0 1 1 0.100 5.750 Z" fill="#e8edf4"/><path d="M6.400 5.750 C6.400 2.600 8.400 0.500 11.300 0.100 L11.600 1.300 C10.400 1.600 9.600 2.200 9.300 2.900 A2.850 2.850 0 1 1 6.400 5.750 Z" fill="#e8edf4"/></svg>
<div class="t" style="left:248.20px;top:177.00px;font-size:9.4px;color:#f8fafc;-webkit-text-stroke:0.35px #f8fafc;transform:scaleX(0.8656);">username</div>
<div class="t" style="left:378.90px;top:178.00px;font-size:9.4px;color:#f8fafc;font-weight:bold;font-family:'Liberation Mono',monospace;transform:scaleX(0.7953);">Karianne</div>
<svg style="left:231.5px;top:201.3px" width="11.8" height="8.7" viewBox="0 0 11.8 8.7"><path d="M0.100 5.750 C0.100 2.600 2.100 0.500 5 0.100 L5.300 1.300 C4.100 1.600 3.300 2.200 3 2.900 A2.850 2.850 0 1 1 0.100 5.750 Z" fill="#7485a0"/><path d="M6.400 5.750 C6.400 2.600 8.400 0.500 11.300 0.100 L11.600 1.300 C10.400 1.600 9.600 2.200 9.300 2.900 A2.850 2.850 0 1 1 6.400 5.750 Z" fill="#7485a0"/></svg>
<div class="t" style="left:248.20px;top:201.00px;font-size:9.4px;color:#a9b6c9;-webkit-text-stroke:0.2px #a9b6c9;transform:scaleX(0.9105);">email</div>
<div class="t" style="left:304.50px;top:203.00px;font-size:9.4px;color:#64748b;font-family:'Liberation Mono',monospace;-webkit-text-stroke:0.25px #64748b;transform:scaleX(0.7835);">Julianne.OConner@kory.org</div>
<svg style="left:231.7px;top:224.6px" width="10.8" height="11.5" viewBox="0 0 13 14.4"><path d="M6.500 0.800 L12.200 3.900 V10.500 L6.500 13.600 L0.800 10.500 V3.900 Z M1.100 4.100 L6.500 7.200 L11.900 4.100 M6.500 7.200 V13.300" stroke="#7485a0" stroke-width="1.7" fill="none" stroke-linejoin="round"/></svg>
<div class="t" style="left:248.20px;top:226.00px;font-size:9.4px;color:#a9b6c9;-webkit-text-stroke:0.2px #a9b6c9;transform:scaleX(0.8573);">address</div>
<div class="t" style="left:369.70px;top:227.00px;font-size:9.4px;color:#64748b;font-family:'Liberation Mono',monospace;-webkit-text-stroke:0.25px #64748b;transform:scaleX(0.7820);">5 fields</div>
<svg style="left:409.8px;top:226.8px" width="4.9" height="7.6" viewBox="0 0 4.9 7.6"><path d="M0.900 0.800 L4 3.800 L0.900 6.800" stroke="#9eaabd" stroke-width="1.3" fill="none" stroke-linecap="round" stroke-linejoin="round"/></svg>
<svg style="left:231.5px;top:250.3px" width="11.8" height="8.7" viewBox="0 0 11.8 8.7"><path d="M0.100 5.750 C0.100 2.600 2.100 0.500 5 0.100 L5.300 1.300 C4.100 1.600 3.300 2.200 3 2.900 A2.850 2.850 0 1 1 0.100 5.750 Z" fill="#7485a0"/><path d="M6.400 5.750 C6.400 2.600 8.400 0.500 11.300 0.100 L11.600 1.300 C10.400 1.600 9.600 2.200 9.300 2.900 A2.850 2.850 0 1 1 6.400 5.750 Z" fill="#7485a0"/></svg>
<div class="t" style="left:248.20px;top:250.00px;font-size:9.4px;color:#a9b6c9;-webkit-text-stroke:0.2px #a9b6c9;transform:scaleX(0.8935);">phone</div>
<div class="t" style="left:339.40px;top:251.00px;font-size:9.4px;color:#64748b;font-family:'Liberation Mono',monospace;-webkit-text-stroke:0.25px #64748b;transform:scaleX(0.7873);">493-170-9623 x156</div>
<svg style="left:231.8px;top:274.1px" width="11.2" height="10.9" viewBox="0 0 11 11"><circle cx="5.500" cy="5.500" r="4.800" stroke="#7485a0" stroke-width="1.1" fill="none"/><ellipse cx="5.500" cy="5.500" rx="2" ry="4.800" stroke="#7485a0" stroke-width="0.950" fill="none"/><path d="M0.800 5.500 H10.200 M1.500 3.200 H9.500 M1.500 7.800 H9.500" stroke="#7485a0" stroke-width="0.850"/></svg>
<div class="t" style="left:248.20px;top:275.00px;font-size:9.4px;color:#a9b6c9;-webkit-text-stroke:0.2px #a9b6c9;transform:scaleX(0.8900);">website</div>
<div class="t" style="left:379.20px;top:276.00px;font-size:9.4px;color:#64748b;font-family:'Liberation Mono',monospace;-webkit-text-stroke:0.25px #64748b;transform:scaleX(0.7886);">kale.biz</div>
<svg style="left:231.7px;top:298.1px" width="10.8" height="11.5" viewBox="0 0 13 14.4"><path d="M6.500 0.800 L12.200 3.900 V10.500 L6.500 13.600 L0.800 10.500 V3.900 Z M1.100 4.100 L6.500 7.200 L11.900 4.100 M6.500 7.200 V13.300" stroke="#7485a0" stroke-width="1.7" fill="none" stroke-linejoin="round"/></svg>
<div class="t" style="left:248.20px;top:299.00px;font-size:9.4px;color:#a9b6c9;-webkit-text-stroke:0.2px #a9b6c9;transform:scaleX(0.8805);">company</div>
<div class="t" style="left:369.70px;top:301.00px;font-size:9.4px;color:#64748b;font-family:'Liberation Mono',monospace;-webkit-text-stroke:0.25px #64748b;transform:scaleX(0.7820);">3 fields</div>
<svg style="left:409.8px;top:300.3px" width="4.9" height="7.6" viewBox="0 0 4.9 7.6"><path d="M0.900 0.800 L4 3.800 L0.900 6.800" stroke="#9eaabd" stroke-width="1.3" fill="none" stroke-linecap="round" stroke-linejoin="round"/></svg>
<div class="a" style="left:424.3px;top:74px;width:305.7px;height:325px;background:#1e293b;"></div>
<div class="a" style="left:424.3px;top:74px;width:0.9px;height:325px;background:#2a3850;"></div>
<div class="t" style="left:434.00px;top:86.00px;font-size:11.3px;color:#f8fafc;font-weight:bold;transform:scaleX(0.9105);">username</div>
<svg style="left:706.6px;top:87px" width="14" height="9.8" viewBox="0 0 11.8 8.7"><path d="M0.100 5.750 C0.100 2.600 2.100 0.500 5 0.100 L5.300 1.300 C4.100 1.600 3.300 2.200 3 2.900 A2.850 2.850 0 1 1 0.100 5.750 Z" fill="#e8edf4"/><path d="M6.400 5.750 C6.400 2.600 8.400 0.500 11.300 0.100 L11.600 1.300 C10.400 1.600 9.600 2.200 9.300 2.900 A2.850 2.850 0 1 1 6.400 5.750 Z" fill="#e8edf4"/></svg>
<div class="t" style="left:434.00px;top:106.00px;font-size:10.4px;color:#e2e8f0;font-family:'Liberation Mono',monospace;-webkit-text-stroke:0.3px #e2e8f0;transform:scaleX(0.9461);">Karianne</div>
<div class="t" style="left:434.00px;top:125.00px;font-size:9px;color:#94a3b8;transform:scaleX(0.9539);">string</div>
<div class="t" style="left:434.50px;top:157.00px;font-size:11.2px;color:#94a3b8;font-weight:bold;transform:scaleX(0.9035);">Related values</div>
<div class="a" style="left:434px;top:175.9px;width:286.6px;height:10.8px;background:#334155;border-radius:1px;"></div>
<div class="a" style="left:452.5px;top:175.9px;width:268.1px;height:10.8px;background:#475569;border-radius:1px;"></div>
<svg style="left:438.6px;top:178.7px" width="3.7" height="5.4" viewBox="0 0 3.7 5.4"><path d="M0.600 0.500 L3.100 2.700 L0.600 4.900" stroke="#f1f5f9" stroke-width="1.25" fill="none"/></svg>
<div class="t" style="left:446.30px;top:178.00px;font-size:7.8px;color:#cbd5e1;font-family:'Liberation Mono',monospace;-webkit-text-stroke:0.25px #cbd5e1;transform:scaleX(0.8960);">1</div>
<div class="t" style="left:457.60px;top:178.00px;font-size:7.8px;color:#f8fafc;font-weight:bold;font-family:'Liberation Mono',monospace;transform:scaleX(0.9509);">Bret</div>
<div class="a" style="left:434px;top:189.39px;width:286.6px;height:10.8px;background:#334155;border-radius:1px;"></div>
<div class="a" style="left:452.5px;top:189.39px;width:268.1px;height:10.8px;background:#475569;border-radius:1px;"></div>
<svg style="left:438.6px;top:192.19px" width="3.7" height="5.4" viewBox="0 0 3.7 5.4"><path d="M0.600 0.500 L3.100 2.700 L0.600 4.900" stroke="#f1f5f9" stroke-width="1.25" fill="none"/></svg>
<div class="t" style="left:446.30px;top:192.00px;font-size:7.8px;color:#cbd5e1;font-family:'Liberation Mono',monospace;-webkit-text-stroke:0.25px #cbd5e1;transform:scaleX(0.8960);">1</div>
<div class="t" style="left:457.60px;top:192.00px;font-size:7.8px;color:#f8fafc;font-weight:bold;font-family:'Liberation Mono',monospace;transform:scaleX(0.9507);">Antonette</div>
<div class="a" style="left:434px;top:202.88px;width:286.6px;height:10.8px;background:#334155;border-radius:1px;"></div>
<div class="a" style="left:452.5px;top:202.88px;width:268.1px;height:10.8px;background:#475569;border-radius:1px;"></div>
<svg style="left:438.6px;top:205.68px" width="3.7" height="5.4" viewBox="0 0 3.7 5.4"><path d="M0.600 0.500 L3.100 2.700 L0.600 4.900" stroke="#f1f5f9" stroke-width="1.25" fill="none"/></svg>
<div class="t" style="left:446.30px;top:205.00px;font-size:7.8px;color:#cbd5e1;font-family:'Liberation Mono',monospace;-webkit-text-stroke:0.25px #cbd5e1;transform:scaleX(0.8960);">1</div>
<div class="t" style="left:457.60px;top:205.00px;font-size:7.8px;color:#f8fafc;font-weight:bold;font-family:'Liberation Mono',monospace;transform:scaleX(0.9509);">Samantha</div>
<div class="a" style="left:434px;top:216.37px;width:286.6px;height:10.8px;background:#334155;border-radius:1px;"></div>
<div class="a" style="left:452.5px;top:216.37px;width:268.1px;height:10.8px;background:#475569;border-radius:1px;"></div>
<svg style="left:438.6px;top:219.17px" width="3.7" height="5.4" viewBox="0 0 3.7 5.4"><path d="M0.600 0.500 L3.100 2.700 L0.600 4.900" stroke="#f1f5f9" stroke-width="1.25" fill="none"/></svg>
<div class="t" style="left:446.30px;top:219.00px;font-size:7.8px;color:#cbd5e1;font-family:'Liberation Mono',monospace;-webkit-text-stroke:0.25px #cbd5e1;transform:scaleX(0.8960);">1</div>
<div class="t" style="left:457.60px;top:219.00px;font-size:7.8px;color:#f8fafc;font-weight:bold;font-family:'Liberation Mono',monospace;transform:scaleX(0.9509);">Karianne</div>
<div class="a" style="left:434px;top:229.86px;width:286.6px;height:10.8px;background:#334155;border-radius:1px;"></div>
<div class="a" style="left:452.5px;top:229.86px;width:268.1px;height:10.8px;background:#475569;border-radius:1px;"></div>
<svg style="left:438.6px;top:232.66px" width="3.7" height="5.4" viewBox="0 0 3.7 5.4"><path d="M0.600 0.500 L3.100 2.700 L0.600 4.900" stroke="#f1f5f9" stroke-width="1.25" fill="none"/></svg>
<div class="t" style="left:446.30px;top:232.00px;font-size:7.8px;color:#cbd5e1;font-family:'Liberation Mono',monospace;-webkit-text-stroke:0.25px #cbd5e1;transform:scaleX(0.8960);">1</div>
<div class="t" style="left:457.60px;top:232.00px;font-size:7.8px;color:#f8fafc;font-weight:bold;font-family:'Liberation Mono',monospace;transform:scaleX(0.9509);">Kamren</div>
<div class="a" style="left:434px;top:243.35px;width:286.6px;height:10.8px;background:#334155;border-radius:1px;"></div>
<div class="a" style="left:452.5px;top:243.35px;width:268.1px;height:10.8px;background:#475569;border-radius:1px;"></div>
<svg style="left:438.6px;top:246.15px" width="3.7" height="5.4" viewBox="0 0 3.7 5.4"><path d="M0.600 0.500 L3.100 2.700 L0.600 4.900" stroke="#f1f5f9" stroke-width="1.25" fill="none"/></svg>
<div class="t" style="left:446.30px;top:246.00px;font-size:7.8px;color:#cbd5e1;font-family:'Liberation Mono',monospace;-webkit-text-stroke:0.25px #cbd5e1;transform:scaleX(0.8960);">1</div>
<div class="t" style="left:457.60px;top:246.00px;font-size:7.8px;color:#f8fafc;font-weight:bold;font-family:'Liberation Mono',monospace;transform:scaleX(0.9509);">Leopoldo_Corkery</div>
<div class="a" style="left:434px;top:256.84px;width:286.6px;height:10.8px;background:#334155;border-radius:1px;"></div>
<div class="a" style="left:452.5px;top:256.84px;width:268.1px;height:10.8px;background:#475569;border-radius:1px;"></div>
<svg style="left:438.6px;top:259.64px" width="3.7" height="5.4" viewBox="0 0 3.7 5.4"><path d="M0.600 0.500 L3.100 2.700 L0.600 4.900" stroke="#f1f5f9" stroke-width="1.25" fill="none"/></svg>
<div class="t" style="left:446.30px;top:259.00px;font-size:7.8px;color:#cbd5e1;font-family:'Liberation Mono',monospace;-webkit-text-stroke:0.25px #cbd5e1;transform:scaleX(0.8960);">1</div>
<div class="t" style="left:457.60px;top:259.00px;font-size:7.8px;color:#f8fafc;font-weight:bold;font-family:'Liberation Mono',monospace;transform:scaleX(0.9509);">Elwyn.Skiles</div>
<div class="a" style="left:434px;top:270.33px;width:286.6px;height:10.8px;background:#334155;border-radius:1px;"></div>
<div class="a" style="left:452.5px;top:270.33px;width:268.1px;height:10.8px;background:#475569;border-radius:1px;"></div>
<svg style="left:438.6px;top:273.13px" width="3.7" height="5.4" viewBox="0 0 3.7 5.4"><path d="M0.600 0.500 L3.100 2.700 L0.600 4.900" stroke="#f1f5f9" stroke-width="1.25" fill="none"/></svg>
<div class="t" style="left:446.30px;top:273.00px;font-size:7.8px;color:#cbd5e1;font-family:'Liberation Mono',monospace;-webkit-text-stroke:0.25px #cbd5e1;transform:scaleX(0.8960);">1</div>
<div class="t" style="left:457.60px;top:273.00px;font-size:7.8px;color:#f8fafc;font-weight:bold;font-family:'Liberation Mono',monospace;transform:scaleX(0.9510);">Maxime_Nienow</div>
<div class="a" style="left:434px;top:283.82px;width:286.6px;height:10.8px;background:#334155;border-radius:1px;"></div>
<div class="a" style="left:452.5px;top:283.82px;width:268.1px;height:10.8px;background:#475569;border-radius:1px;"></div>
<svg style="left:438.6px;top:286.62px" width="3.7" height="5.4" viewBox="0 0 3.7 5.4"><path d="M0.600 0.500 L3.100 2.700 L0.600 4.900" stroke="#f1f5f9" stroke-width="1.25" fill="none"/></svg>
<div class="t" style="left:446.30px;top:286.00px;font-size:7.8px;color:#cbd5e1;font-family:'Liberation Mono',monospace;-webkit-text-stroke:0.25px #cbd5e1;transform:scaleX(0.8960);">1</div>
<div class="t" style="left:457.60px;top:286.00px;font-size:7.8px;color:#f8fafc;font-weight:bold;font-family:'Liberation Mono',monospace;transform:scaleX(0.9509);">Delphine</div>
<div class="a" style="left:434px;top:297.31px;width:286.6px;height:10.8px;background:#334155;border-radius:1px;"></div>
<div class="a" style="left:452.5px;top:297.31px;width:268.1px;height:10.8px;background:#475569;border-radius:1px;"></div>
<svg style="left:438.6px;top:300.11px" width="3.7" height="5.4" viewBox="0 0 3.7 5.4"><path d="M0.600 0.500 L3.100 2.700 L0.600 4.900" stroke="#f1f5f9" stroke-width="1.25" fill="none"/></svg>
<div class="t" style="left:446.30px;top:300.00px;font-size:7.8px;color:#cbd5e1;font-family:'Liberation Mono',monospace;-webkit-text-stroke:0.25px #cbd5e1;transform:scaleX(0.8960);">1</div>
<div class="t" style="left:457.60px;top:300.00px;font-size:7.8px;color:#f8fafc;font-weight:bold;font-family:'Liberation Mono',monospace;transform:scaleX(0.9509);">Moriah.Stanton</div>
<div class="a" style="left:0px;top:399px;width:730px;height:18px;background:#1e293b;"></div>
<div class="a" style="left:0px;top:398.8px;width:730px;height:1.7px;background:#283650;"></div>
<div class="a" style="left:6.9px;top:404.3px;width:9px;height:9px;background:#526178;border-radius:1.5px;"></div>
<svg style="left:7px;top:404.5px" width="8.8" height="8.7" viewBox="0 0 8.8 8.7"><path d="M2.3 5.600 L4.400 2.800 L6.500 5.600 Z" fill="#c3cddb"/></svg>
<div class="a" style="left:17.0px;top:404.3px;width:9px;height:9px;background:#526178;border-radius:1.5px;"></div>
<svg style="left:17.1px;top:404.5px" width="8.8" height="8.7" viewBox="0 0 8.8 8.7"><path d="M2.300 3.100 L4.400 5.900 L6.500 3.100 Z" fill="#c3cddb"/></svg>
<div class="a" style="left:27.099999999999998px;top:404.3px;width:9px;height:9px;background:#526178;border-radius:1.5px;"></div>
<svg style="left:27.2px;top:404.5px" width="8.8" height="8.7" viewBox="0 0 8.8 8.7"><path d="M5.700 2.300 L2.900 4.350 L5.700 6.400 Z" fill="#c3cddb"/></svg>
<div class="a" style="left:37.199999999999996px;top:404.3px;width:9px;height:9px;background:#526178;border-radius:1.5px;"></div>
<svg style="left:37.3px;top:404.5px" width="8.8" height="8.7" viewBox="0 0 8.8 8.7"><path d="M3.100 2.300 L5.900 4.350 L3.100 6.400 Z" fill="#c3cddb"/></svg>
<div class="t" style="left:50.40px;top:405.00px;font-size:9.2px;color:#f1f5f9;font-weight:bold;transform:scaleX(0.8300);">Navigate</div>
<div class="a" style="left:90.9px;top:404.3px;width:9px;height:9px;background:#526178;border-radius:1.5px;"></div>
<div class="a" style="left:101.2px;top:404.3px;width:8.4px;height:9px;background:#526178;border-radius:1.5px;"></div>
<div class="t" style="left:94.20px;top:406.00px;font-size:6.5px;color:#a9b6c9;font-weight:bold;transform:scaleX(1.0129);">[</div>
<div class="t" style="left:104.60px;top:406.00px;font-size:6.5px;color:#a9b6c9;font-weight:bold;transform:scaleX(1.0129);">]</div>
<div class="t" style="left:114.90px;top:405.00px;font-size:9.2px;color:#f1f5f9;font-weight:bold;transform:scaleX(0.8024);">History</div>
<div class="a" style="left:149.9px;top:404.3px;width:9.3px;height:9px;background:#526178;border-radius:1.5px;"></div>
<div class="t" style="left:151.20px;top:407.00px;font-size:5.5px;color:#a9b6c9;font-weight:bold;transform:scaleX(0.7619);">esc</div>
<div class="t" style="left:163.90px;top:405.00px;font-size:9.2px;color:#f1f5f9;font-weight:bold;transform:scaleX(0.8024);">Reset path</div>
<div class="a" style="left:211.4px;top:404.3px;width:8.6px;height:9px;background:#526178;border-radius:1.5px;"></div>
<div class="a" style="left:221.5px;top:404.3px;width:8.6px;height:9px;background:#526178;border-radius:1.5px;"></div>
<svg style="left:213.3px;top:406.3px" width="5" height="5" viewBox="0 0 5 5"><path d="M2.500 0.400 L4.600 2.600 H3.500 V4.600 H1.500 V2.600 H0.400 Z" stroke="#a9b6c9" stroke-width="0.7" fill="none" stroke-linejoin="round"/></svg>
<div class="t" style="left:224.00px;top:406.00px;font-size:6.5px;color:#a9b6c9;font-weight:bold;transform:scaleX(0.8080);">C</div>
<div class="t" style="left:234.90px;top:405.00px;font-size:9.2px;color:#f1f5f9;font-weight:bold;transform:scaleX(0.8007);">Copy selected node</div>
<svg style="left:714.2px;top:402.6px" width="11.4" height="11.4" viewBox="0 0 11.4 11.4"><circle cx="5.700" cy="5.700" r="2.900" fill="#fff"/><circle cx="5.70" cy="1.15" r="0.9" fill="#fff"/><circle cx="9.64" cy="3.42" r="0.9" fill="#fff"/><circle cx="9.64" cy="7.97" r="0.9" fill="#fff"/><circle cx="5.70" cy="10.25" r="0.9" fill="#fff"/><circle cx="1.76" cy="7.98" r="0.9" fill="#fff"/><circle cx="1.76" cy="3.42" r="0.9" fill="#fff"/></svg>
</body></html>
